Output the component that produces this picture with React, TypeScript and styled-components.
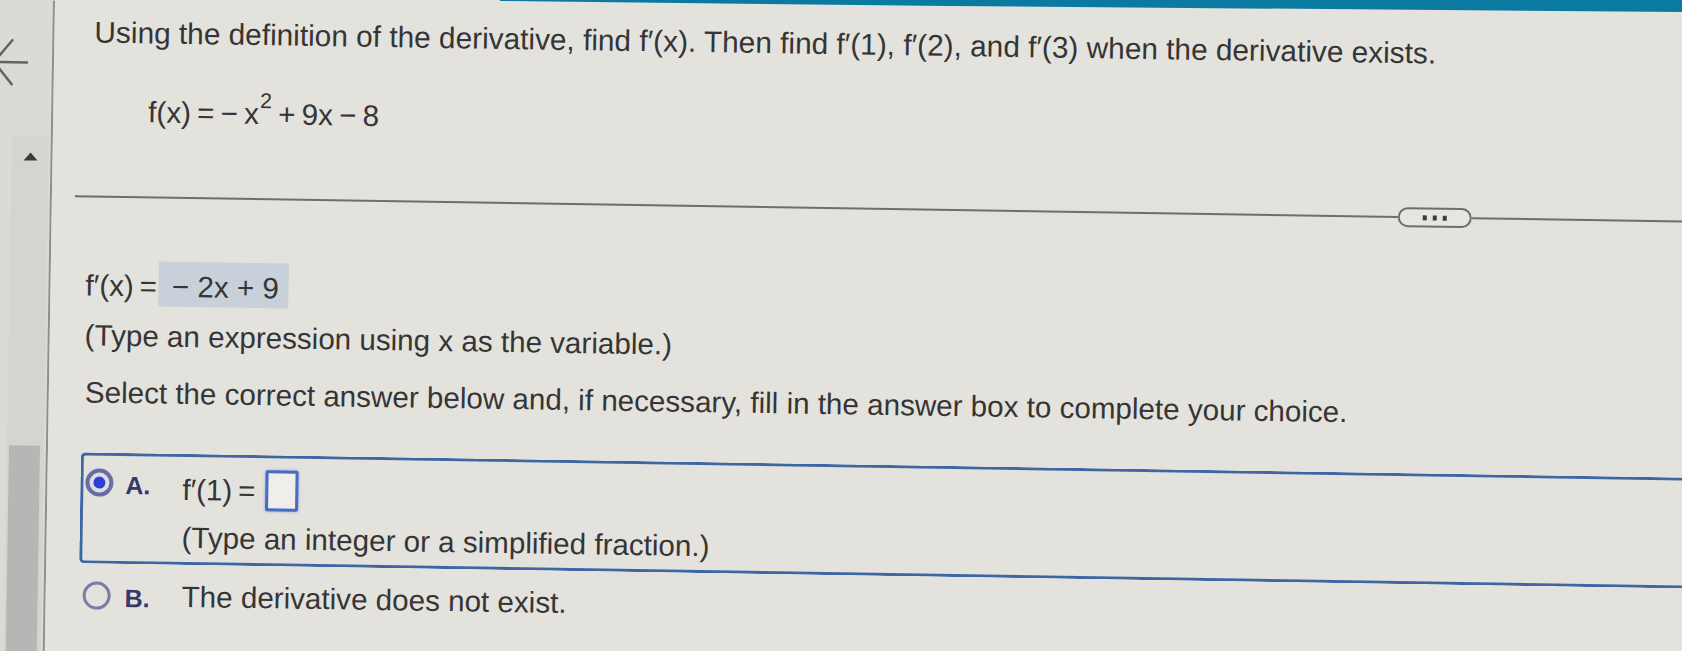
import styled, { createGlobalStyle } from 'styled-components'

const GlobalStyle = createGlobalStyle`
  html, body {
    margin: 0;
    padding: 0;
    width: 100%;
    height: 100%;
    overflow: hidden;
  }
  body {
    background: linear-gradient(to right, #dcdad5 55px, #e4e2dd 55px);
    font-family: 'Liberation Sans', Arial, sans-serif;
    color: #353535;
  }
  #root {
    width: 100%;
    height: 100%;
  }
`

export default function App() {
  return (
    <Screen>
      <GlobalStyle />
      <TopBar />
      <Page>
        <Sidebar>
          <BackArrow viewBox="0 0 30 50" width="30" height="50">
            <path d="M13 3 L-5 25 L13 47" />
            <path d="M-4 25 H28" />
          </BackArrow>
          <Track>
            <ScrollUp />
            <Thumb />
          </Track>
        </Sidebar>

        <Main>
          <Question>
            Using the definition of the derivative, find f′(x). Then find f′(1), f′(2), and f′(3) when the derivative exists.
          </Question>

          <Formula>
            f(x) = − x<Sup>2</Sup> + 9x − 8
          </Formula>

          <DividerRow>
            <Rule />
            <MorePill>
              <Dot />
              <Dot />
              <Dot />
            </MorePill>
            <RightRule />
          </DividerRow>

          <AnswerRow>
            <MathText>f′(x)&thinsp;=</MathText>
            <Highlight>− 2x + 9</Highlight>
          </AnswerRow>

          <Hint $indent={35} $gap={13}>(Type an expression using x as the variable.)</Hint>

          <Hint $indent={36} $gap={23}>
            Select the correct answer below and, if necessary, fill in the answer box to complete your choice.
          </Hint>

          <ChoiceBox>
            <ChoiceTop>
              <Radio $checked />
              <Letter $offset={12}>A.</Letter>
              <MathLine>f′(1)&thinsp;=</MathLine>
              <AnswerBox />
            </ChoiceTop>
            <Hint $indent={97} $gap={9}>(Type an integer or a simplified fraction.)</Hint>
          </ChoiceBox>

          <ChoiceRow>
            <Radio $checked={false} />
            <Letter $offset={14}>B.</Letter>
            <Plain>The derivative does not exist.</Plain>
          </ChoiceRow>
        </Main>
      </Page>
    </Screen>
  )
}

// ----- STYLES -----

const Screen = styled.div`
  position: relative;
  width: 100%;
  height: 100%;
  overflow: hidden;
`

// the blue header strip, seen at an angle in the photo
const TopBar = styled.div`
  position: absolute;
  top: 0;
  left: 0;
  right: 0;
  height: 13px;
  background: #0b7aa1;
  clip-path: polygon(500px 0, 100% 0, 100% 12px, 950px 6px, 500px 1px);
  z-index: 2;
`

const Page = styled.div`
  display: grid;
  grid-template-columns: 55px 1fr;
  width: 1710px;
  height: 700px;
  transform: rotate(0.9deg);
  transform-origin: 0 0;
`

const Sidebar = styled.div`
  box-sizing: border-box;
  background: #dcdad5;
  border-right: 2px solid #8f8e8b;
  display: flex;
  flex-direction: column;
`

const BackArrow = styled.svg`
  margin-top: 37px;
  fill: none;
  stroke: #626260;
  stroke-width: 2.5;
  stroke-linecap: round;
`

const Track = styled.div`
  margin: 49px 0 0 14px;
  width: 37px;
  flex: 1;
  background: #d5d4d0;
  display: flex;
  flex-direction: column;
  align-items: flex-start;
`

const ScrollUp = styled.div`
  margin: 16px 0 0 12px;
  width: 0;
  height: 0;
  border-left: 7px solid transparent;
  border-right: 7px solid transparent;
  border-bottom: 8px solid #3a3a3a;
`

const Thumb = styled.div`
  margin: 285px 0 0 2px;
  width: 31px;
  flex: 1;
  background: #b6b6b4;
`

const Main = styled.div`
  display: flex;
  flex-direction: column;
  align-items: flex-start;
  padding-top: 14px;
  background: #e4e2dd;
  font-size: 29.6px;
  line-height: 34px;
  white-space: nowrap;
`

const Question = styled.div`
  margin-left: 40px;
  font-size: 29.8px;
`

const Formula = styled.div`
  margin: 45px 0 0 95px;
  word-spacing: -2px;
`

const Sup = styled.sup`
  font-size: 0.72em;
  vertical-align: 0.74em;
  line-height: 0;
  margin-left: 1px;
`

const DividerRow = styled.div`
  align-self: stretch;
  margin: 58px 0 0 23px;
  height: 20px;
  display: flex;
  align-items: center;
`

const Rule = styled.div`
  flex: 1;
  height: 2px;
  background: #6f6e6b;
`

const RightRule = styled(Rule)`
  flex: 0 0 235px;
`

const MorePill = styled.div`
  box-sizing: border-box;
  width: 74px;
  height: 20px;
  border: 2px solid #6f6e6b;
  border-radius: 10px;
  display: flex;
  align-items: center;
  justify-content: center;
  gap: 6px;
  background: #e6e5e1;
`

const Dot = styled.span`
  width: 4px;
  height: 5px;
  background: #3c3c3c;
`

const AnswerRow = styled.div`
  margin: 54px 0 0 35px;
  display: flex;
  align-items: baseline;
  gap: 1px;
`

const MathText = styled.span``

const Highlight = styled.span`
  padding: 10px 10px 5px 14px;
  line-height: 30px;
  background: #c8d1d9;
`

const Hint = styled.div<{ $indent: number; $gap: number }>`
  margin-top: ${({ $gap }) => $gap}px;
  margin-left: ${({ $indent }) => $indent}px;
`

const ChoiceBox = styled.div`
  align-self: stretch;
  margin: 43px 0 0 33px;
  padding: 10px 0 7px 2px;
  border: 3px solid #3d67a2;
  border-right: none;
  border-radius: 5px 0 0 5px;
`

const ChoiceTop = styled.div`
  display: flex;
  align-items: flex-start;
  height: 45px;
`

const Radio = styled.span<{ $checked: boolean }>`
  box-sizing: border-box;
  flex: 0 0 28px;
  width: 28px;
  height: 28px;
  margin-top: 3px;
  border-radius: 50%;
  border: ${({ $checked }) => ($checked ? '4px solid #6a6d9f' : '3px solid #7f79a8')};
  background: ${({ $checked }) => ($checked ? '#dcdde8' : 'transparent')};
  display: flex;
  align-items: center;
  justify-content: center;

  &::after {
    content: '';
    display: ${({ $checked }) => ($checked ? 'block' : 'none')};
    width: 12px;
    height: 12px;
    border-radius: 50%;
    background: #2d40d0;
  }
`

const Letter = styled.span<{ $offset: number }>`
  margin-left: ${({ $offset }) => $offset}px;
  width: 57px;
  font-size: 25px;
  font-weight: bold;
  line-height: 38px;
  color: #34386b;
`

const MathLine = styled.span`
  line-height: 45px;
`

const AnswerBox = styled.span`
  box-sizing: border-box;
  margin: 2px 0 0 10px;
  width: 33px;
  height: 41px;
  border: 3px solid #4a6bc3;
  border-radius: 2px;
  background: #efeeeb;
  box-shadow: 0 0 3px rgba(70, 110, 210, 0.6);
`

const ChoiceRow = styled.div`
  margin: 15px 0 0 37px;
  display: flex;
  align-items: flex-start;
`

const Plain = styled.span``
